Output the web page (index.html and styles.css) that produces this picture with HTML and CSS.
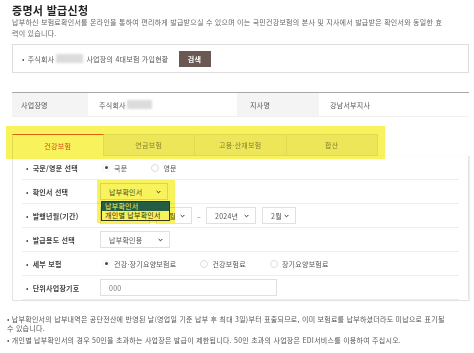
FILE: index.html
```html
<!DOCTYPE html>
<html lang="ko">
<head>
<meta charset="utf-8">
<title>증명서 발급신청</title>
<link rel="stylesheet" href="styles.css">
</head>
<body>
<div class="page">
  <h1 class="title">증명서 발급신청</h1>
  <p class="desc">납부하신 보험료확인서를 온라인을 통하여 편리하게 발급받으실 수 있으며 이는 국민건강보험의 본사 및 지사에서 발급받은 확인서와 동일한 효<br>력이 있습니다.</p>

  <div class="search-box">
    <span class="dot">•</span><span>주식회사</span><span class="blur"></span><span>사업장의 4대보험 가입현황</span>
    <button class="btn">검색</button>
  </div>

  <div class="info">
    <div class="info-label">사업장명</div>
    <div class="info-value">주식회사<span class="blur small"></span></div>
    <div class="info-label second">지사명</div>
    <div class="info-value">강남서부지사</div>
  </div>

  <div class="tabs">
    <div class="tab active">건강보험</div>
    <div class="tab">연금보험</div>
    <div class="tab">고용·산재보험</div>
    <div class="tab">합산</div>
  </div>

  <div class="form">
    <div class="row">
      <div class="label"><span class="dot">•</span>국문/영문 선택</div>
      <div class="field radios">
        <span class="radio checked"></span><span class="rtext">국문</span>
        <span class="radio"></span><span class="rtext">영문</span>
      </div>
    </div>
    <div class="row">
      <div class="label"><span class="dot">•</span>확인서 선택</div>
      <div class="field">
        <div class="select-wrap">
          <div class="select w68"><span>납부확인서</span><svg class="chev" viewBox="0 0 6 4"><polyline points="0.8,0.8 3,3 5.2,0.8"/></svg></div>
          <ul class="dropdown">
            <li class="sel">납부확인서</li>
            <li>개인별 납부확인서</li>
          </ul>
        </div>
      </div>
    </div>
    <div class="row">
      <div class="label"><span class="dot">•</span>발행년월(기간)</div>
      <div class="field">
        <div class="select w50"><span>2024년</span><svg class="chev" viewBox="0 0 6 4"><polyline points="0.8,0.8 3,3 5.2,0.8"/></svg></div>
        <div class="select w36"><span>1월</span><svg class="chev" viewBox="0 0 6 4"><polyline points="0.8,0.8 3,3 5.2,0.8"/></svg></div>
        <span class="dash">–</span>
        <div class="select w50"><span>2024년</span><svg class="chev" viewBox="0 0 6 4"><polyline points="0.8,0.8 3,3 5.2,0.8"/></svg></div>
        <div class="select w34"><span>2월</span><svg class="chev" viewBox="0 0 6 4"><polyline points="0.8,0.8 3,3 5.2,0.8"/></svg></div>
      </div>
    </div>
    <div class="row">
      <div class="label"><span class="dot">•</span>발급용도 선택</div>
      <div class="field">
        <div class="select w70"><span>납부확인용</span><svg class="chev" viewBox="0 0 6 4"><polyline points="0.8,0.8 3,3 5.2,0.8"/></svg></div>
      </div>
    </div>
    <div class="row">
      <div class="label"><span class="dot">•</span>세부 보험</div>
      <div class="field radios">
        <span class="radio checked"></span><span class="rtext">건강·장기요양보험료</span>
        <span class="radio"></span><span class="rtext">건강보험료</span>
        <span class="radio"></span><span class="rtext">장기요양보험료</span>
      </div>
    </div>
    <div class="row">
      <div class="label"><span class="dot">•</span>단위사업장기호</div>
      <div class="field">
        <div class="input">000</div>
      </div>
    </div>
  </div>

  <ul class="notes">
    <li>• 납부확인서의 납부내역은 공단전산에 반영된 날(영업일 기준 납부 후 최대 3일)부터 표출되므로, 이미 보험료를 납부하셨더라도 미납으로 표기될<br>수 있습니다.</li>
    <li>• 개인별 납부확인서의 경우 50인을 초과하는 사업장은 발급이 제한됩니다. 50인 초과의 사업장은 EDI서비스를 이용하여 주십시오.</li>
  </ul>
</div>
</body>
</html>
```

FILE: styles.css
```css
* {
  box-sizing: border-box;
  margin: 0;
  padding: 0;
}

body {
  font-family: "Noto Sans CJK KR", "Noto Sans", sans-serif;
  font-size: 7px;
  letter-spacing: 0.25px;
  color: #555;
  background: #fff;
  width: 474px;
  height: 353px;
  overflow: hidden;
}

.page {
  padding: 4px 5px 0 12px;
}

.title {
  font-size: 11px;
  font-weight: 700;
  color: #222;
  line-height: 13px;
  letter-spacing: 0.3px;
}

.desc {
  line-height: 11px;
  color: #666;
  white-space: nowrap;
}

/* search box */
.search-box {
  margin-top: 5px;
  height: 29px;
  border: 1px solid #dedede;
  display: flex;
  align-items: center;
  padding-left: 9px;
  color: #555;
}

.dot {
  margin-right: 3px;
}

.blur {
  display: inline-block;
  width: 27px;
  height: 9px;
  background: #dcdcdc;
  filter: blur(1px);
  margin: 0 3px 0 2px;
}

.blur.small {
  width: 25px;
  margin-left: 1px;
}

.btn {
  margin-left: 10px;
  width: 32px;
  height: 16px;
  border: 0;
  background: #6c5853;
  color: #fff;
  font-family: inherit;
  font-size: 7px;
  font-weight: 700;
  letter-spacing: 0.25px;
}

/* info table */
.info {
  margin-top: 19px;
  display: grid;
  grid-template-columns: 76px 149px 82px 1fr;
  height: 25px;
  border-top: 1px solid #a8a8a8;
  border-bottom: 1px solid #efefef;
  color: #555;
}

.info-label,
.info-value {
  display: flex;
  align-items: center;
}

.info-label {
  background: #f4f4f4;
  padding-left: 9px;
}

.info-label.second {
  padding-left: 13px;
}

.info-value {
  padding-left: 11px;
}

/* tabs */
.tabs {
  position: relative;
  margin-top: 17px;
  width: 366px;
  display: grid;
  grid-template-columns: repeat(4, 1fr);
  height: 22px;
}

.tab {
  display: flex;
  align-items: center;
  justify-content: center;
  background: #f3f3f3;
  border: 1px solid #e6e6e6;
  border-left: 0;
  color: #8a8a8a;
}

.tab.active {
  background: #fff;
  border-top: 1px solid #e0662e;
  border-left: 1px solid #e6e6e6;
  border-bottom: 0;
  color: #d9532a;
}

.tabs::after {
  content: "";
  position: absolute;
  left: -6px;
  right: -7px;
  top: -8px;
  bottom: -3px;
  background: #f8f25c;
  mix-blend-mode: multiply;
  pointer-events: none;
}

/* form */
.form {
  border: 1px solid #e4e4e4;
  border-top: 0;
  padding: 0 9px;
  box-shadow: 1px 0 1px #eee;
}

.row {
  display: grid;
  grid-template-columns: 78px 1fr;
  align-items: center;
  height: 24px;
  border-bottom: 1px solid #eeeeee;
}

.label {
  color: #444;
  font-weight: 700;
  padding-left: 4px;
}

.label .dot {
  margin-right: 4px;
  font-weight: 400;
}

.field {
  display: flex;
  align-items: center;
}

.radios .radio {
  width: 8px;
  height: 8px;
  border-radius: 50%;
  border: 1px solid #dcdcdc;
  background: #fff;
  position: relative;
  flex: none;
  margin-left: 2px;
}

.radios .radio.checked {
  border-color: #f0f0f0;
}

.radios .radio.checked::after {
  content: "";
  position: absolute;
  left: 1.5px;
  top: 1.5px;
  width: 3px;
  height: 3px;
  border-radius: 50%;
  background: #444;
}

.rtext {
  margin-left: 4px;
  margin-right: 22px;
  color: #555;
}

.select {
  height: 17px;
  border: 1px solid #e0e0e0;
  background: #fff;
  display: flex;
  align-items: center;
  justify-content: space-between;
  padding: 0 6px 0 8px;
  color: #555;
  margin-right: 6px;
}

.w68 { width: 68px; }
.w70 { width: 70px; }
.w50 { width: 50px; }
.w36 { width: 36px; }
.w34 { width: 34px; }

.chev {
  width: 5px;
  height: 4px;
  fill: none;
  stroke: #333;
  stroke-width: 1.2;
}

.dash {
  margin: 0 5px 0 -1px;
  color: #666;
}

.select-wrap {
  position: relative;
}

.select-wrap::after {
  content: "";
  position: absolute;
  left: -3px;
  top: -3px;
  width: 78px;
  height: 43px;
  background: #f8f25c;
  mix-blend-mode: multiply;
  pointer-events: none;
  z-index: 3;
}

.dropdown {
  list-style: none;
  position: absolute;
  left: 1px;
  top: 18px;
  width: 69px;
  border: 1px solid #3a3a3a;
  background: #fff;
  z-index: 2;
  color: #333;
}

.dropdown li {
  height: 9px;
  line-height: 9px;
  padding-left: 3px;
  white-space: nowrap;
}

.dropdown li.sel {
  background: #2562b8;
  color: #fff;
}

.input {
  width: 177px;
  height: 17px;
  border: 1px solid #e0e0e0;
  display: flex;
  align-items: center;
  padding-left: 8px;
  color: #777;
}

/* notes */
.notes {
  list-style: none;
  margin: 14px 0 0 -5px;
  line-height: 9px;
  color: #555;
  white-space: nowrap;
}

.notes li + li {
  margin-top: 2.5px;
}
```
